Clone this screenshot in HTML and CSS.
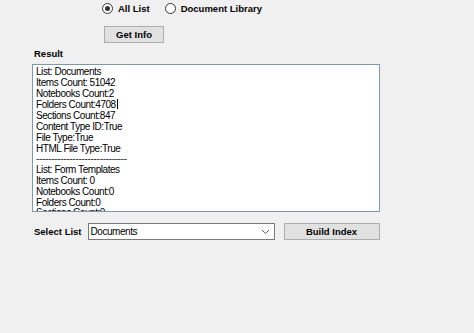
FILE: index.html
```html
<!DOCTYPE html>
<html lang="en">

<head>
    <meta charset="UTF-8">
    <title>List Info</title>
    <link rel="stylesheet" href="styles.css">
</head>

<body>
    <div class="form">
        <div class="radio-row">
            <label class="radio checked"><span class="dot"></span>All List</label>
            <label class="radio"><span class="dot"></span>Document Library</label>
        </div>

        <div class="btn-row">
            <div class="btn get-info">Get Info</div>
        </div>

        <div class="label result-label">Result</div>

        <div class="result-box">
            <div>List: Documents</div>
            <div>Items Count: 51042</div>
            <div>Notebooks Count:2</div>
            <div>Folders Count:4708<span class="caret"></span></div>
            <div>Sections Count:847</div>
            <div>Content Type ID:True</div>
            <div>File Type:True</div>
            <div>HTML File Type:True</div>
            <div class="dashes">------------------------------</div>
            <div>List: Form Templates</div>
            <div>Items Count: 0</div>
            <div>Notebooks Count:0</div>
            <div>Folders Count:0</div>
            <div>Sections Count:0</div>
        </div>

        <div class="select-row">
            <div class="label">Select List</div>
            <div class="combo">
                <span>Documents</span>
                <svg width="9" height="6" viewBox="0 0 9 6"><path d="M1 1 L4.5 4.5 L8 1" fill="none" stroke="#606060" stroke-width="1"/></svg>
            </div>
            <div class="btn build">Build Index</div>
        </div>
    </div>
</body>

</html>
```

FILE: styles.css
```css
body {
    margin: 0;
    background: #f0f0f0;
    font-family: "Liberation Sans", Arial, sans-serif;
    font-size: 9.5px;
    color: #000;
}

.form {
    padding-top: 2px;
}

.radio-row {
    display: flex;
    margin-left: 102px;
    height: 13px;
    align-items: center;
    gap: 15px;
}

.radio {
    display: flex;
    align-items: center;
    gap: 5px;
    font-weight: bold;
}

.dot {
    width: 9px;
    height: 9px;
    border: 1px solid #333;
    border-radius: 50%;
    background: #fff;
    display: inline-flex;
    align-items: center;
    justify-content: center;
}

.radio.checked .dot::after {
    content: "";
    width: 5px;
    height: 5px;
    border-radius: 50%;
    background: #333;
}

.btn-row {
    margin-top: 11px;
    margin-left: 104px;
}

.btn {
    background: #e1e1e1;
    border: 1px solid #adadad;
    font-weight: bold;
    display: flex;
    align-items: center;
    justify-content: center;
    box-sizing: border-box;
}

.get-info {
    width: 60px;
    height: 17px;
}

.label {
    font-weight: bold;
}

.result-label {
    margin-top: 3px;
    margin-left: 34px;
    height: 18px;
    line-height: 15px;
}

.result-box {
    margin-left: 32px;
    width: 348px;
    height: 148px;
    box-sizing: border-box;
    border: 1px solid #7a9aae;
    background: #fff;
    padding: 2px 3px;
    overflow: hidden;
    font-size: 10px;
    line-height: 10.8px;
    letter-spacing: -0.45px;
}

.dashes {
    letter-spacing: -0.3px;
    color: #333;
}

.caret {
    display: inline-block;
    width: 1px;
    height: 10px;
    background: #000;
    vertical-align: -1px;
    margin-left: 1px;
}

.select-row {
    display: flex;
    align-items: center;
    margin-top: 11px;
    margin-left: 34px;
}

.combo {
    margin-left: 6px;
    width: 187px;
    height: 17px;
    box-sizing: border-box;
    border: 1px solid #7a7a7a;
    background: #fff;
    display: flex;
    align-items: center;
    justify-content: space-between;
    padding: 0 4px 0 2px;
    font-size: 10px;
    letter-spacing: -0.45px;
}

.build {
    margin-left: 9px;
    width: 96px;
    height: 17px;
}
```
